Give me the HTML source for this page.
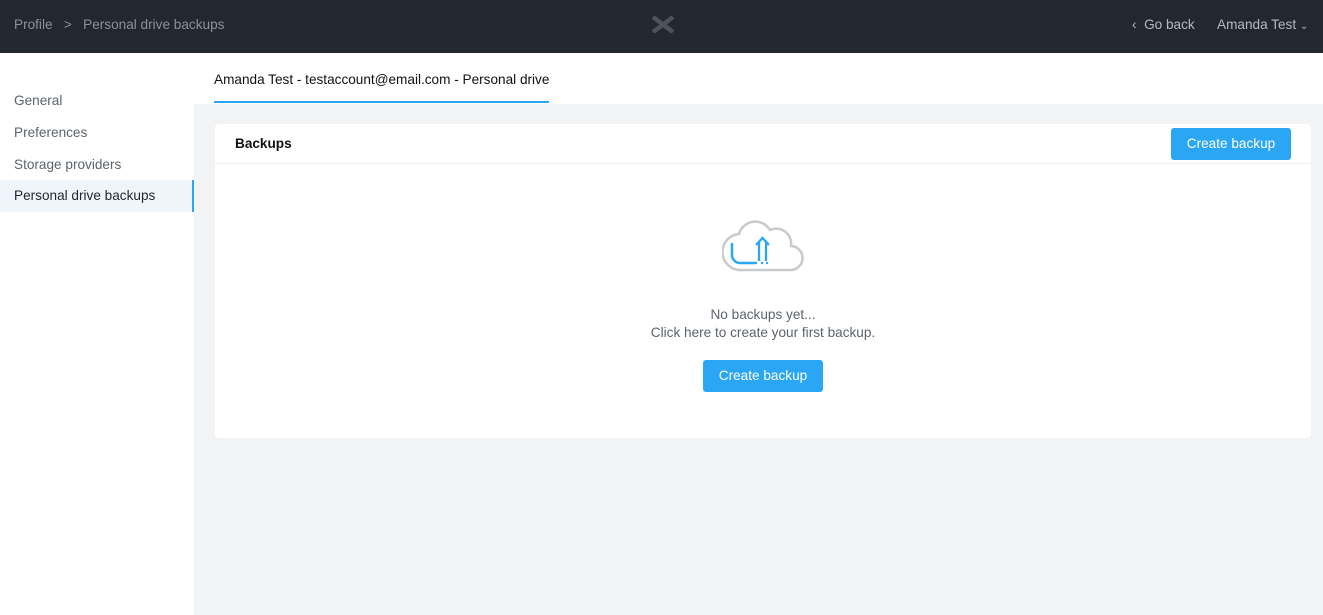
<!DOCTYPE html>
<html><head><meta charset="utf-8"><style>
*{margin:0;padding:0;box-sizing:border-box}
body{width:1323px;height:615px;overflow:hidden;font-family:"Liberation Sans",sans-serif;background:#f2f3f5;position:relative;color:#3b3f45}
.hdr{position:absolute;left:0;top:0;width:1323px;height:53px;background:#23272f;color:#8b919b;font-size:13.6px}
.hdr .bc{position:absolute;left:14px;top:17px}
.hdr .r{position:absolute;top:17px;color:#b5bac2}
.side{position:absolute;left:0;top:53px;width:194px;height:562px;background:#fff}
.side div{position:absolute;left:0;width:194px;height:32px;line-height:32px;padding-left:14px;font-size:13.6px;color:#5d636b}
.side .act{background:#eef6fc;color:#23272f;border-right:2px solid #2aa6f5}
.tabbar{position:absolute;left:194px;top:53px;width:1129px;height:51px;background:#fff}
.tab{position:absolute;left:20px;top:19px;font-size:13.6px;color:#111;}
.tabline{position:absolute;left:20px;top:48px;width:335px;height:2px;background:#2aa6f5}
.card{position:absolute;left:215px;top:124px;width:1096px;height:314px;background:#fff;border-radius:4px}
.card .t{position:absolute;left:20px;top:12px;font-size:13.6px;font-weight:bold;color:#111}
.card .sep{position:absolute;left:0;top:39px;width:100%;height:1px;background:#eef0f2}
.btn{position:absolute;background:#2aa6f5;color:#fff;font-size:13.6px;text-align:center;border-radius:3px;height:32px;line-height:32px;width:120px}
.msg{position:absolute;left:0;width:1096px;text-align:center;font-size:13.6px;color:#5d636b}
</style></head><body>
<div class="hdr">
<div class="bc">Profile&nbsp;&nbsp; &gt; &nbsp;&nbsp;Personal drive backups</div>
<svg style="position:absolute;left:651px;top:16px" width="24" height="17" viewBox="0 0 24 17"><path d="M2 1 L22 16 M22 1 L2 16" stroke="#4d535d" stroke-width="4.5" fill="none"/></svg>
<div class="r" style="left:1132px">&#8249;&nbsp; Go back</div>
<div class="r" style="left:1217px">Amanda Test <span style="font-size:10px">&#8964;</span></div>
</div>
<div class="side">
<div style="top:32px">General</div>
<div style="top:64px">Preferences</div>
<div style="top:96px">Storage providers</div>
<div class="act" style="top:127px">Personal drive backups</div>
</div>
<div class="tabbar"><div class="tab">Amanda Test - testaccount@email.com - Personal drive</div><div class="tabline"></div></div>
<div class="card">
<div class="t">Backups</div>
<div class="btn" style="left:956px;top:4px">Create backup</div>
<div class="sep"></div>
<svg style="position:absolute;left:507px;top:90px" width="84" height="60" viewBox="0 0 84 60">
<path d="M20 56 H68 A12 12 0 0 0 69 32 A15 15 0 0 0 48 16 A17 17 0 0 0 17 20 A18 18 0 0 0 20 56 Z" fill="none" stroke="#c8cacd" stroke-width="2.5"/>
<path d="M10 30 V41 A8 8 0 0 0 18 49 H34" fill="none" stroke="#2aa6f5" stroke-width="2.5" stroke-linecap="round"/>
<path d="M37 47 V27 M44 47 V27 M34 31 L40.5 24 L47 31" fill="none" stroke="#2aa6f5" stroke-width="2.3"/>
<circle cx="40" cy="49" r="1.2" fill="#2aa6f5"/><circle cx="45" cy="49" r="1.2" fill="#2aa6f5"/>
</svg>
<div class="msg" style="top:183px">No backups yet...</div>
<div class="msg" style="top:201px">Click here to create your first backup.</div>
<div class="btn" style="left:488px;top:236px">Create backup</div>
</div>
</body></html>
